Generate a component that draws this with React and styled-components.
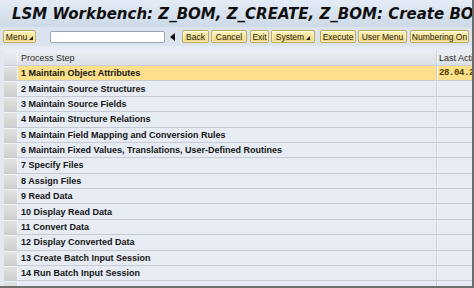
import React from "react";
import styled, { createGlobalStyle } from "styled-components";

const GlobalStyle = createGlobalStyle`
  html, body {
    margin: 0;
    padding: 0;
    background: #e4e9f1;
    overflow: hidden;
  }
`;

const steps = [
  "1 Maintain Object Attributes",
  "2 Maintain Source Structures",
  "3 Maintain Source Fields",
  "4 Maintain Structure Relations",
  "5 Maintain Field Mapping and Conversion Rules",
  "6 Maintain Fixed Values, Translations, User-Defined Routines",
  "7 Specify Files",
  "8 Assign Files",
  "9 Read Data",
  "10 Display Read Data",
  "11 Convert Data",
  "12 Display Converted Data",
  "13 Create Batch Input Session",
  "14 Run Batch Input Session",
  "",
];

const Screen = styled.div`
  width: 474px;
  height: 288px;
  box-sizing: border-box;
  display: flex;
  flex-direction: column;
  overflow: hidden;
  border-right: 2px solid #6e6e6e;
  border-bottom: 2px solid #6e6e6e;
  background: #e4e9f1;
  font-family: "Liberation Sans", Arial, sans-serif;
`;

const TitleBar = styled.div`
  height: 27px;
  flex: none;
  display: flex;
  align-items: center;
  padding-left: 12px;
  background: linear-gradient(#e3ecf6, #cdd9e7);
  white-space: nowrap;
  overflow: hidden;
`;

const Title = styled.h1`
  margin: 0;
  font-family: "DejaVu Sans", Verdana, sans-serif;
  font-size: 15px;
  font-weight: 700;
  font-style: italic;
  color: #101010;
`;

const Toolbar = styled.div`
  height: 19px;
  flex: none;
  display: flex;
  align-items: center;
  padding-left: 3px;
  background: #dbe4ee;
`;

const Button = styled.div`
  width: ${({ $w }) => $w}px;
  height: 13px;
  flex: none;
  box-sizing: border-box;
  display: flex;
  align-items: center;
  justify-content: center;
  margin-right: ${({ $gap }) => $gap ?? 2}px;
  border: 1px solid #c2a95a;
  border-radius: 2px;
  background: linear-gradient(#fff6c4, #f6e290 55%, #ecd27a);
  box-shadow: inset 0 0 0 1px rgba(255, 255, 255, 0.5);
  font-size: 8.5px;
  color: #1c1c1c;
  white-space: nowrap;
`;

const Arrow = styled.span`
  display: inline-block;
  width: 0;
  height: 0;
  margin-left: 2px;
  margin-top: 3px;
  border-left: 4px solid transparent;
  border-bottom: 4px solid #222;
`;

const CommandField = styled.div`
  width: 115px;
  height: 12px;
  flex: none;
  box-sizing: border-box;
  margin-left: 14px;
  border: 1px solid #9aa6b4;
  border-radius: 2px;
  background: #fff;
`;

const Back = styled.span`
  width: 0;
  height: 0;
  margin: 0 7px 0 5px;
  border-top: 4px solid transparent;
  border-bottom: 4px solid transparent;
  border-right: 5px solid #111;
`;

const Gap = styled.div`
  height: 4px;
  flex: none;
  background: #e6ecf3;
`;

const Table = styled.div`
  flex: 1;
  display: flex;
  flex-direction: column;
  padding-left: 4px;
  overflow: hidden;
`;

const Row = styled.div`
  display: grid;
  grid-template-columns: 13px 1px 418px 2px 1fr;
  height: ${({ $head }) => ($head ? "16px" : "15.38px")};
  flex: none;
  box-sizing: border-box;
  border-bottom: 1px solid ${({ $head }) => ($head ? "#c9ced6" : "#c6cbd4")};
  background: ${({ $head, $active }) =>
    $head ? "linear-gradient(#eceff3, #dcdfe5)" : $active ? "#fedf8a" : "#e7ebf3"};
`;

const Selector = styled.div`
  background: ${({ $head }) =>
    $head ? "transparent" : "linear-gradient(#e2e2e2, #cfcfcf)"};
  border-top: ${({ $head }) => ($head ? "none" : "1px solid #f2f2f2")};
`;

const Sep = styled.div`
  background: #f3f5f8;
`;

const Divider = styled.div`
  background: #cdd2da;
  border-right: 1px solid #f2f4f8;
  box-sizing: border-box;
`;

const Cell = styled.div`
  display: flex;
  align-items: center;
  padding-left: ${({ $pl }) => $pl ?? 3}px;
  font-size: 9px;
  font-weight: ${({ $head }) => ($head ? 400 : 700)};
  color: ${({ $head }) => ($head ? "#2e2e2e" : "#141414")};
  white-space: nowrap;
  overflow: hidden;
`;

const DateCell = styled(Cell)`
  font-family: "Liberation Mono", "Courier New", monospace;
  font-size: 9px;
  font-weight: 700;
  letter-spacing: -0.4px;
  color: #4f4100;
`;

const buttons = [
  { label: "Back", w: 27, gap: 2 },
  { label: "Cancel", w: 36, gap: 3 },
  { label: "Exit", w: 19, gap: 2 },
  { label: "System", w: 44, gap: 5, arrow: true },
  { label: "Execute", w: 36, gap: 2 },
  { label: "User Menu", w: 49, gap: 3 },
  { label: "Numbering On", w: 59, gap: 0 },
];

export default function App() {
  return (
    <>
      <GlobalStyle />
      <Screen>
        <TitleBar>
          <Title>LSM Workbench: Z_BOM, Z_CREATE, Z_BOM: Create BOM</Title>
        </TitleBar>
        <Toolbar>
          <Button $w={33} $gap={0}>
            Menu
            <Arrow />
          </Button>
          <CommandField />
          <Back />
          {buttons.map((b) => (
            <Button key={b.label} $w={b.w} $gap={b.gap}>
              {b.label}
              {b.arrow && <Arrow />}
            </Button>
          ))}
        </Toolbar>
        <Gap />
        <Table>
          <Row $head>
            <Selector $head />
            <Sep />
            <Cell $head>Process Step</Cell>
            <Divider />
            <Cell $head $pl={1}>Last Activity</Cell>
          </Row>
          {steps.map((s, i) => (
            <Row key={i} $active={i === 0}>
              <Selector />
              <Sep />
              <Cell>{s}</Cell>
              <Divider />
              {i === 0 ? <DateCell $pl={1}>28.04.2010</DateCell> : <Cell />}
            </Row>
          ))}
        </Table>
      </Screen>
    </>
  );
}
